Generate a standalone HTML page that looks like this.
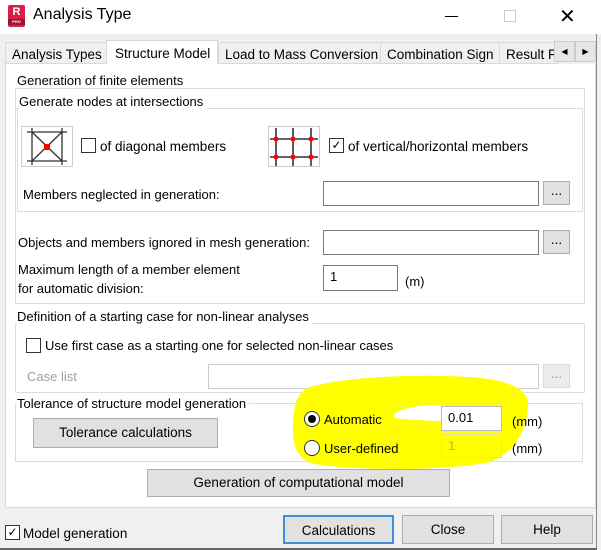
<!DOCTYPE html>
<html><head><style>
*{margin:0;padding:0;box-sizing:border-box}
body{width:601px;height:550px;background:#f0f0f0;font-family:"Liberation Sans",sans-serif;font-size:13px;color:#000;position:relative;overflow:hidden}
.a{position:absolute;white-space:nowrap}
.box{position:absolute;border:1px solid #dcdcdc}
.inp{position:absolute;background:#fff;border:1px solid #7a7a7a;font-size:13px;padding:3px 0 0 6px}
.dis{background:#f0f0f0;border-color:#cccccc;color:#a0a0a0}
.btn{position:absolute;background:#e1e1e1;border:1px solid #adadad;text-align:center;font-size:13.5px}
.cb{position:absolute;width:15px;height:15px;border:1px solid #333;background:#fff}
.rd{position:absolute;width:16px;height:16px;border:1px solid #333;border-radius:50%;background:#fff}
.tab{position:absolute;top:42px;height:22px;border:1px solid #d9d9d9;background:#f0f0f0;font-size:13.5px;padding:4px 0 0 6px;overflow:hidden}
</style></head><body>
<div class="a" style="left:0;top:0;width:601px;height:34px;background:#fff"></div>
<div class="a" style="left:8px;top:5px;width:17px;height:22px;background:#d6204a;border-radius:2px;color:#fff;font-weight:bold;font-size:11px;text-align:center;line-height:14px">R<div style="font-size:4px;line-height:6px;background:#a0102f">PRO</div></div>
<div class="a" style="left:33px;top:6px;font-size:16px">Analysis Type</div>
<div class="a" style="left:445px;top:16px;width:13px;height:1px;background:#000"></div>
<div class="a" style="left:504px;top:10px;width:12px;height:12px;border:1px solid #ccc"></div>
<div class="a" style="left:559px;top:4px;font-size:20px;font-weight:300">✕</div>

<div class="tab" style="left:5px;width:102px">Analysis Types</div>
<div class="tab" style="left:218px;width:163px">Load to Mass Conversion</div>
<div class="tab" style="left:380px;width:120px">Combination Sign</div>
<div class="tab" style="left:499px;width:60px">Result F</div>
<div class="a" style="left:106px;top:40px;width:112px;height:25px;background:#fff;border:1px solid #d9d9d9;border-bottom:none;font-size:13.5px;padding:5px 0 0 8px">Structure Model</div>
<div class="a" style="left:554px;top:41px;width:21px;height:21px;background:#e6e6e6;border:1px solid #ccc;font-size:8px;text-align:center;line-height:19px">◀</div>
<div class="a" style="left:575px;top:41px;width:21px;height:21px;background:#e6e6e6;border:1px solid #ccc;font-size:8px;text-align:center;line-height:19px">▶</div>

<div class="a" style="left:5px;top:64px;width:591px;height:444px;background:#fff;border:1px solid #d9d9d9;border-top:none"></div>

<div class="box" style="left:15px;top:88px;width:570px;height:216px"></div>
<div class="a" style="left:17px;top:73px;background:#fff;padding-right:3px">Generation of finite elements</div>
<div class="box" style="left:17px;top:108px;width:566px;height:104px"></div>
<div class="a" style="left:19px;top:94px;background:#fff;padding-right:4px">Generate nodes at intersections</div>

<svg class="a" style="left:21px;top:126px" width="52" height="41" viewBox="0 0 52 41"><rect x="0.5" y="0.5" width="51" height="40" fill="#fff" stroke="#ccc"/><path d="M6 6H46M6 35H46M11 2V39M41 2V39M11 6L41 35M41 6L11 35" stroke="#333" stroke-width="1.3" fill="none"/><rect x="23" y="18" width="6" height="6" fill="red"/></svg>
<div class="cb" style="left:81px;top:138px"></div>
<div class="a" style="left:100px;top:139px;font-size:13.5px">of diagonal members</div>
<svg class="a" style="left:268px;top:126px" width="52" height="41" viewBox="0 0 52 41"><rect x="0.5" y="0.5" width="51" height="40" fill="#fff" stroke="#ccc"/><path d="M2 13H50M2 31H50M8 2V40M25 2V40M43 2V40" stroke="#333" stroke-width="1.6" fill="none"/><g fill="red"><circle cx="8" cy="13" r="2.5"/><circle cx="25" cy="13" r="2.5"/><circle cx="43" cy="13" r="2.5"/><circle cx="8" cy="31" r="2.5"/><circle cx="25" cy="31" r="2.5"/><circle cx="43" cy="31" r="2.5"/></g></svg>
<div class="cb" style="left:329px;top:138px;font-size:12px;line-height:13px;text-align:center">✓</div>
<div class="a" style="left:348px;top:139px;font-size:13.5px">of vertical/horizontal members</div>

<div class="a" style="left:23px;top:187px">Members neglected in generation:</div>
<div class="inp" style="left:323px;top:181px;width:216px;height:25px"></div>
<div class="btn" style="left:543px;top:181px;width:27px;height:24px;line-height:18px">...</div>

<div class="a" style="left:18px;top:235px">Objects and members ignored in mesh generation:</div>
<div class="inp" style="left:323px;top:230px;width:216px;height:25px"></div>
<div class="btn" style="left:543px;top:230px;width:27px;height:24px;line-height:18px">...</div>
<div class="a" style="left:18px;top:262px">Maximum length of a member element</div>
<div class="a" style="left:18px;top:281px">for automatic division:</div>
<div class="inp" style="left:323px;top:265px;width:75px;height:26px">1</div>
<div class="a" style="left:405px;top:274px">(m)</div>

<div class="box" style="left:15px;top:323px;width:570px;height:70px"></div>
<div class="a" style="left:17px;top:309px;background:#fff;padding-right:3px">Definition of a starting case for non-linear analyses</div>
<div class="cb" style="left:26px;top:338px"></div>
<div class="a" style="left:45px;top:338px">Use first case as a starting one for selected non-linear cases</div>
<div class="a" style="left:27px;top:369px;color:#a0a0a0">Case list</div>
<div class="inp dis" style="left:208px;top:364px;width:331px;height:25px;background:#fff"></div>
<div class="btn" style="left:543px;top:364px;width:27px;height:24px;line-height:18px;color:#999;background:#ececec;border-color:#ddd">...</div>

<div class="box" style="left:15px;top:403px;width:568px;height:59px"></div>
<div class="a" style="left:17px;top:396px;background:#fff;padding-right:3px">Tolerance of structure model generation</div>
<div class="btn" style="left:33px;top:418px;width:185px;height:30px;line-height:28px">Tolerance calculations</div>

<svg class="a" style="left:290px;top:372px" width="245" height="98" viewBox="0 0 245 98"><path d="M20 15C60 4 130 2 180 5C225 8 240 20 238 35C236 60 225 80 200 90C150 100 60 98 25 92C5 88 2 70 3 50C4 30 8 20 20 15Z" fill="#ffff00"/><path d="M130 34C150 32 170 35 185 38C195 42 200 48 185 50C160 50 120 48 105 46C100 40 115 36 130 34Z" fill="#fff"/></svg>
<div class="rd" style="left:304px;top:411px"><div style="margin:3px;width:8px;height:8px;border-radius:50%;background:#000"></div></div>
<div class="a" style="left:324px;top:412px">Automatic</div>
<div class="inp" style="left:441px;top:406px;width:61px;height:25px;border-color:#bbb">0.01</div>
<div class="a" style="left:512px;top:414px">(mm)</div>
<div class="rd" style="left:304px;top:440px"></div>
<div class="a" style="left:324px;top:441px">User-defined</div>
<div class="inp" style="left:441px;top:434px;width:61px;height:24px;background:transparent;border-color:#e0e0a0;color:#b0b060">1</div>
<div class="a" style="left:512px;top:441px">(mm)</div>

<div class="btn" style="left:147px;top:469px;width:303px;height:28px;line-height:26px">Generation of computational model</div>

<div class="cb" style="left:5px;top:525px;font-size:12px;line-height:13px;text-align:center">✓</div>
<div class="a" style="left:23px;top:526px;font-size:13.5px">Model generation</div>
<div class="btn" style="left:283px;top:515px;width:111px;height:29px;line-height:27px;border:2px solid #3c8fd8">Calculations</div>
<div class="btn" style="left:402px;top:515px;width:92px;height:29px;line-height:27px">Close</div>
<div class="btn" style="left:501px;top:515px;width:92px;height:29px;line-height:27px">Help</div>
<div class="a" style="left:596px;top:34px;width:1px;height:516px;background:#888"></div>
<div class="a" style="left:0;top:548px;width:597px;height:2px;background:#666"></div>
</body></html>
